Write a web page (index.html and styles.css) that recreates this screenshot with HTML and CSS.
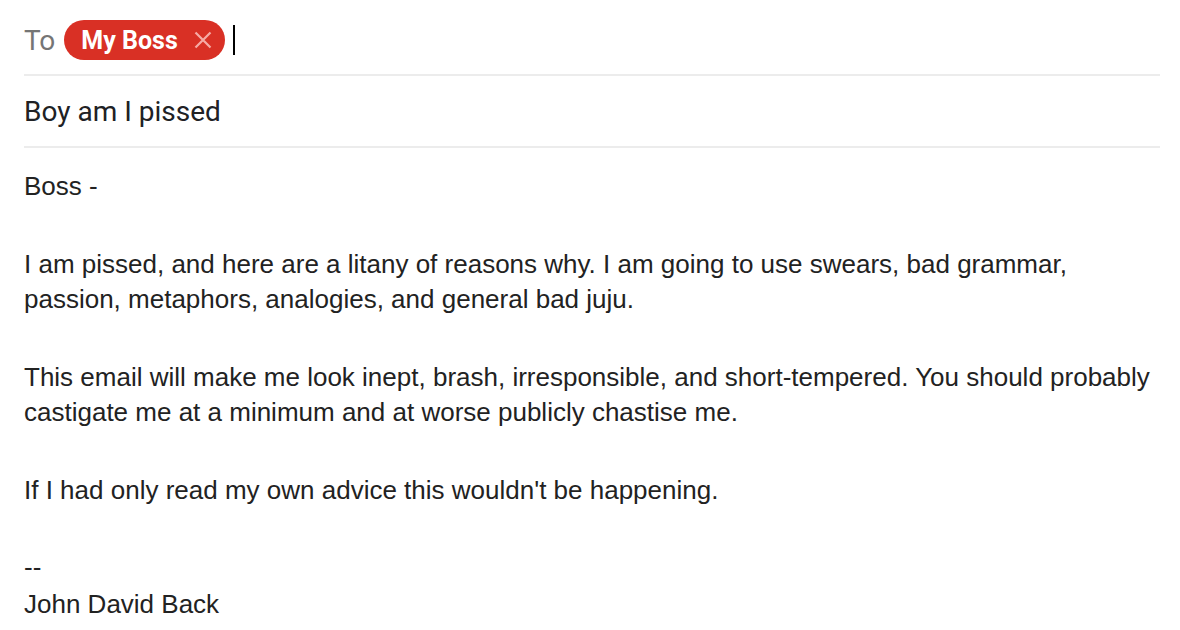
FILE: index.html
```html
<!DOCTYPE html>
<html>
<head>
<meta charset="utf-8">
<link rel="stylesheet" href="styles.css">
</head>
<body>
<div class="compose">
  <div class="row to-row">
    <span class="to-label">To</span>
    <span class="chip">
      <span class="chip-name">My Boss</span>
      <svg class="chip-x" width="20" height="20" viewBox="0 0 20 20"><path d="M2.5 2.5 L17.5 17.5 M17.5 2.5 L2.5 17.5" stroke="#f6aaa5" stroke-width="2.2" fill="none"/></svg>
    </span>
    <span class="caret"></span>
  </div>
  <div class="row subject-row">Boy am I pissed</div>
  <div class="body">
    <p>Boss -</p>
    <p>I am pissed, and here are a litany of reasons why. I am going to use swears, bad grammar, passion, metaphors, analogies, and general bad juju.</p>
    <p>This email will make me look inept, brash, irresponsible, and short-tempered. You should probably castigate me at a minimum and at worse publicly chastise me.</p>
    <p>If I had only read my own advice this wouldn't be happening.</p>
    <p class="sig">--<br>John David Back</p>
  </div>
</div>
</body>
</html>
```
FILE: styles.css
```css
html, body {
  margin: 0;
  padding: 0;
  background: #ffffff;
  overflow: hidden;
}
.compose {
  width: 1136px;
  margin-left: 24px;
}
.row {
  display: flex;
  align-items: center;
  border-bottom: 2px solid #ececec;
  font-family: Roboto, "Liberation Sans", sans-serif;
  box-sizing: border-box;
}
.to-row {
  height: 76px;
  padding-top: 6px;
}
.to-label {
  font-size: 28px;
  color: #757575;
  margin-right: 9px;
}
.chip {
  display: flex;
  align-items: center;
  height: 40px;
  padding: 0 12px 0 17px;
  background: #d93025;
  border-radius: 20px;
  color: #ffffff;
}
.chip-name {
  font-size: 25px;
  font-weight: 700;
  margin-right: 15px;
}
.chip-x {
  display: block;
}
.caret {
  width: 2px;
  height: 30px;
  background: #000;
  margin-left: 8px;
}
.subject-row {
  height: 72px;
  font-size: 28px;
  color: #202124;
}
.body {
  font-family: "Liberation Sans", Arial, sans-serif;
  font-size: 26px;
  line-height: 35px;
  color: #222222;
  padding-top: 21px;
}
.body p {
  margin: 0 0 43px 0;
}
.body p.sig {
  line-height: 37px;
  margin-top: -2px;
  margin-bottom: 0;
}
```
